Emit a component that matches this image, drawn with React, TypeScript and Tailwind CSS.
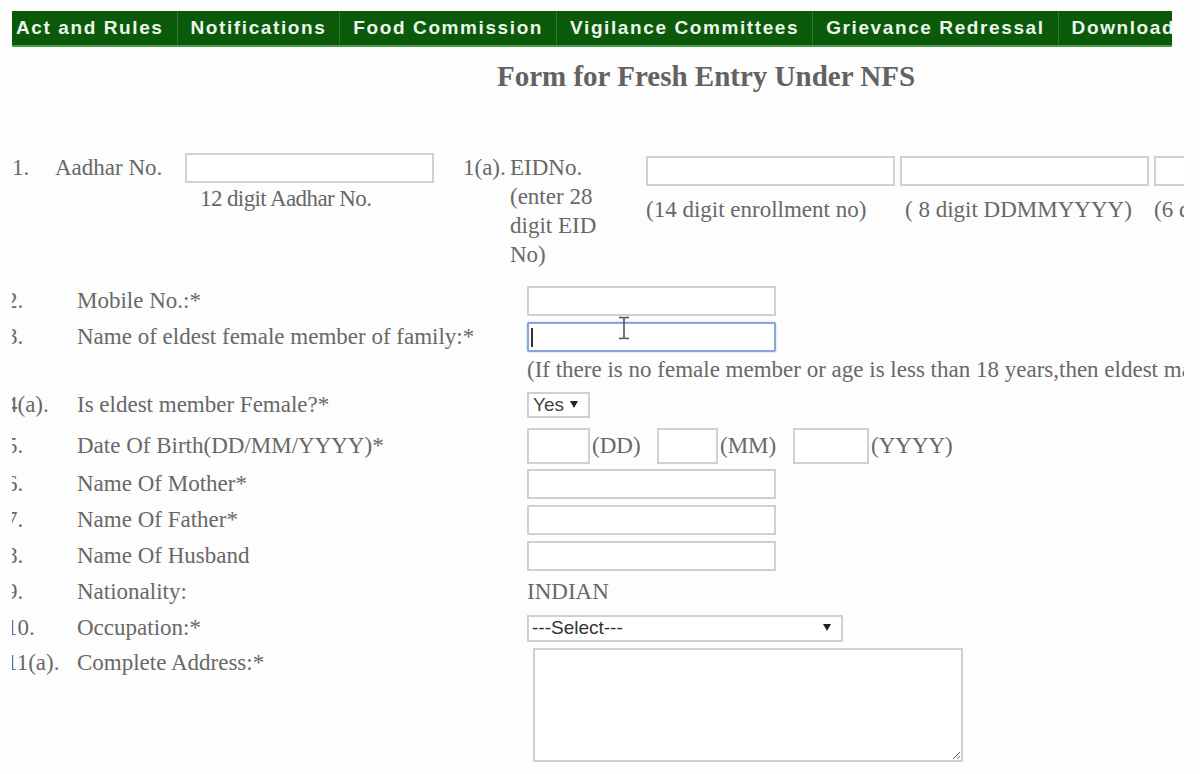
import React from "react";

const navItems = [
  "Act and Rules",
  "Notifications",
  "Food Commission",
  "Vigilance Committees",
  "Grievance Redressal",
  "Download Forms",
];

function TextBox({ w = "w-[249px]", h = "h-[30px]" }: { w?: string; h?: string }) {
  return <div className={`${w} ${h} shrink-0 border-2 border-[#d0d0d0] bg-white`} />;
}

function Caret() {
  return (
    <svg width="8" height="10" viewBox="0 0 8 10" className="ml-[6px] shrink-0">
      <path d="M0 1 L8 1 L4 8 Z" fill="#222" />
    </svg>
  );
}

function Row({
  num,
  label,
  h,
  top = false,
  children,
}: {
  num?: string;
  label?: string;
  h: string;
  top?: boolean;
  children?: React.ReactNode;
}) {
  return (
    <div className={`flex ${top ? "items-start" : "items-center"} ${h}`}>
      <div className={`-ml-[6px] w-[71px] shrink-0 leading-[30px] ${top ? "mt-[2px]" : ""}`}>{num}</div>
      <div className={`w-[450px] shrink-0 leading-[30px] whitespace-nowrap ${top ? "mt-[2px]" : ""}`}>{label}</div>
      <div className="flex items-center">{children}</div>
    </div>
  );
}

export default function App() {
  return (
    <div className="relative w-[1200px] h-[774px] overflow-hidden bg-[#fdfdfd] font-['Liberation_Serif',serif] text-[23px] text-[#686868]">
      <div className="w-[1184px] overflow-hidden">
        {/* Navigation bar */}
        <div className="ml-[12px] mt-[11px] flex h-[36px] w-[1160px] overflow-hidden border-b-2 border-[#4e9a4e] bg-[#0a5a0a]">
          {navItems.map((item, i) => (
            <div
              key={item}
              className={`${i === 0 ? "pl-[4px]" : "pl-[13px]"} pr-[13px] border-r border-[#2f7a2f] whitespace-nowrap font-['Liberation_Sans',sans-serif] text-[19px] font-bold leading-[34px] tracking-[1.6px] text-[#eef5ee]`}
            >
              {item}
            </div>
          ))}
        </div>

        {/* Title */}
        <h1 className="mt-[11px] w-[1412px] text-center text-[29px] font-bold leading-[36px] text-[#626262]">
          Form for Fresh Entry Under NFS
        </h1>

        {/* Row 1 */}
        <div className="ml-[12px] mt-[59px] flex items-start">
          <div className="w-[43px] shrink-0 leading-[30px]">1.</div>
          <div className="w-[130px] shrink-0 leading-[30px]">Aadhar No.</div>
          <div className="w-[278px] shrink-0">
            <TextBox />
            <div className="pl-[15px] leading-[30px] mt-[1px] tracking-[-0.6px]">12 digit Aadhar No.</div>
          </div>
          <div className="w-[47px] shrink-0 leading-[30px]">1(a).</div>
          <div className="w-[118px] shrink-0 leading-[29px]">EIDNo. (enter 28 digit EID No)</div>
          <div className="ml-[18px] mt-[3px] flex gap-[5px]">
            <div className="w-[249px] shrink-0">
              <TextBox />
              <div className="mt-[9px] leading-[30px] whitespace-nowrap">(14 digit enrollment no)</div>
            </div>
            <div className="w-[249px] shrink-0">
              <TextBox />
              <div className="mt-[9px] pl-[5px] leading-[30px] whitespace-nowrap">( 8 digit DDMMYYYY)</div>
            </div>
            <div className="w-[249px] shrink-0">
              <TextBox />
              <div className="mt-[9px] leading-[30px] whitespace-nowrap">(6 digit HHMMSS)</div>
            </div>
          </div>
        </div>

        {/* Rows 2+ */}
        <div className="ml-[12px] mt-[14px] overflow-hidden">
          <Row num="2." label="Mobile No.:*" h="h-[36px]">
            <TextBox />
          </Row>
          <Row num="3." label="Name of eldest female member of family:*" h="h-[36px]">
            <div className="relative h-[30px] w-[249px] rounded-[2px] border-2 border-[#86a6dc] bg-white shadow-[0_0_2px_#a9c2ec]">
              <span className="absolute left-[2px] top-[4px] h-[19px] w-[2px] bg-[#333]" />
            </div>
          </Row>
          <Row h="h-[30px]">
            <div className="whitespace-nowrap leading-[30px]">
              (If there is no female member or age is less than 18 years,then eldest male member&apos;s name)
            </div>
          </Row>
          <Row num="4(a)." label="Is eldest member Female?*" h="h-[40px]">
            <div className="flex h-[26px] w-[63px] items-center border-2 border-[#d0d0d0] bg-white pl-[4px] font-['Liberation_Sans',sans-serif] text-[19px] text-[#444]">
              Yes
              <Caret />
            </div>
          </Row>
          <Row num="5." label="Date Of Birth(DD/MM/YYYY)*" h="h-[41px]">
            <TextBox w="w-[63px]" h="h-[36px]" />
            <span className="ml-[2px] w-[65px] leading-[30px]">(DD)</span>
            <TextBox w="w-[61px]" h="h-[36px]" />
            <span className="ml-[2px] w-[73px] leading-[30px]">(MM)</span>
            <TextBox w="w-[76px]" h="h-[36px]" />
            <span className="ml-[2px] leading-[30px]">(YYYY)</span>
          </Row>
          <Row num="6." label="Name Of Mother*" h="h-[36px]">
            <TextBox />
          </Row>
          <Row num="7." label="Name Of Father*" h="h-[36px]">
            <TextBox />
          </Row>
          <Row num="8." label="Name Of Husband" h="h-[36px]">
            <TextBox />
          </Row>
          <Row num="9." label="Nationality:" h="h-[36px]">
            <span className="leading-[30px]">INDIAN</span>
          </Row>
          <Row num="10." label="Occupation:*" h="h-[36px]">
            <div className="flex h-[27px] w-[316px] items-center justify-between border-2 border-[#d0d0d0] bg-white pl-[3px] pr-[10px] font-['Liberation_Sans',sans-serif] text-[19px] text-[#333]">
              <span>---Select---</span>
              <svg width="8" height="10" viewBox="0 0 8 10">
                <path d="M0 1 L8 1 L4 8 Z" fill="#222" />
              </svg>
            </div>
          </Row>
          <Row num="11(a)." label="Complete Address:*" h="h-[120px]" top>
            <textarea className="ml-[6px] mt-[2px] h-[114px] w-[430px] border-2 border-[#d0d0d0] bg-white outline-none" />
          </Row>
        </div>
      </div>

      {/* Mouse I-beam cursor over focused field */}
      <svg className="absolute left-[617px] top-[316px]" width="14" height="24" viewBox="0 0 14 24">
        <path d="M2 1.5 H5.5 Q7 1.5 7 3 Q7 1.5 8.5 1.5 H12 M7 3 V21 M2 22.5 H5.5 Q7 22.5 7 21 Q7 22.5 8.5 22.5 H12" stroke="#555" strokeWidth="1.6" fill="none" />
      </svg>
    </div>
  );
}
